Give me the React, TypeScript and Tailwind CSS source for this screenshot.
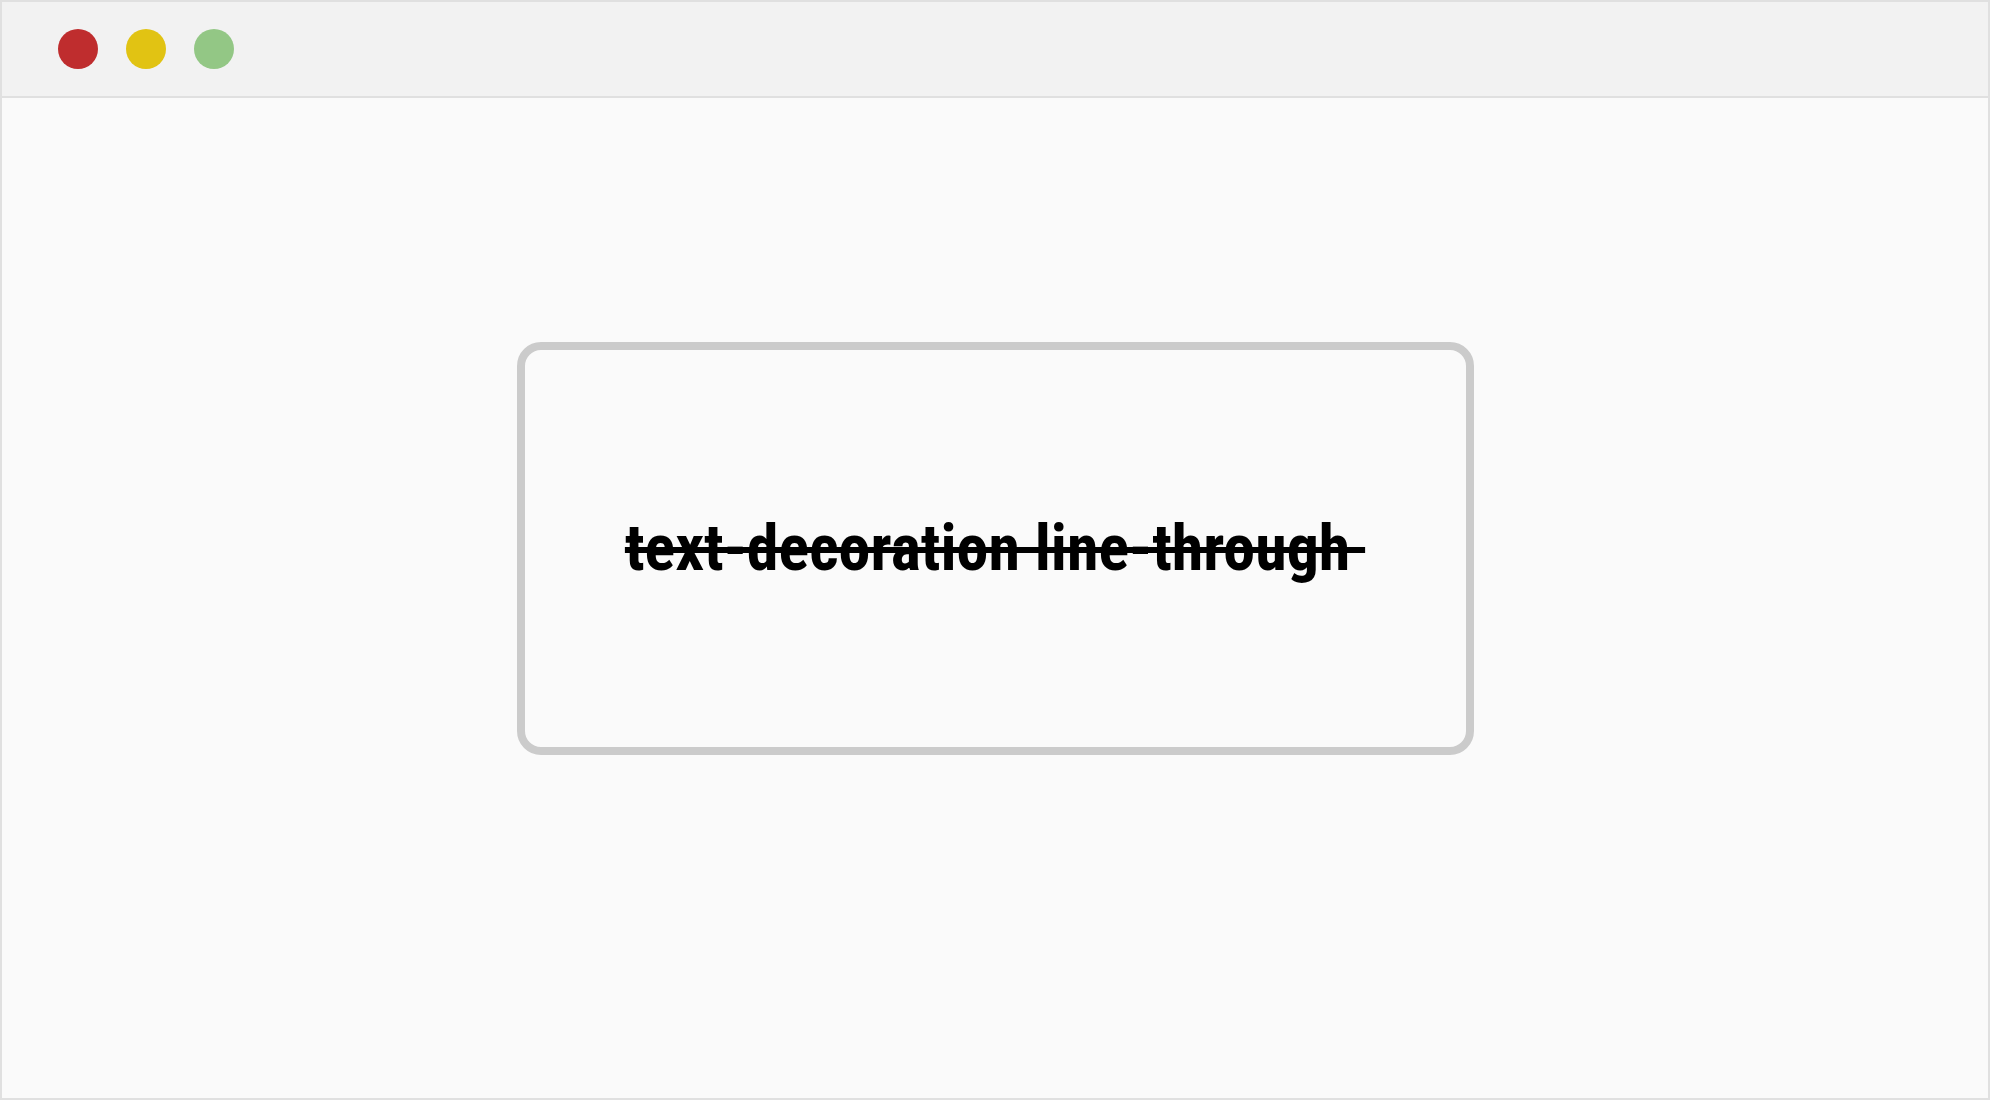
export default function App() {
  return (
    <div className="flex h-[1100px] w-[1990px] flex-col border-2 border-[#e0e0e0] bg-[#fafafa]">
      {/* window chrome */}
      <div className="flex h-[96px] shrink-0 items-center gap-[28px] border-b-2 border-[#e0e0e0] bg-[#f2f2f2] pl-[56px]">
        <span className="h-[40px] w-[40px] rounded-full bg-[#bf2d2e]" />
        <span className="h-[40px] w-[40px] rounded-full bg-[#e1c313]" />
        <span className="h-[40px] w-[40px] rounded-full bg-[#93c785]" />
      </div>
      <div className="flex flex-1 items-center justify-center pb-[99px]">
        <div className="flex h-[413px] w-[957px] items-center justify-center rounded-[24px] border-[8px] border-[#cbcbcb]">
          <span className="whitespace-pre font-['Roboto_Condensed'] text-[64px] font-bold text-black line-through">
            {'text-decoration line-through\u00a0'}
          </span>
        </div>
      </div>
    </div>
  )
}
